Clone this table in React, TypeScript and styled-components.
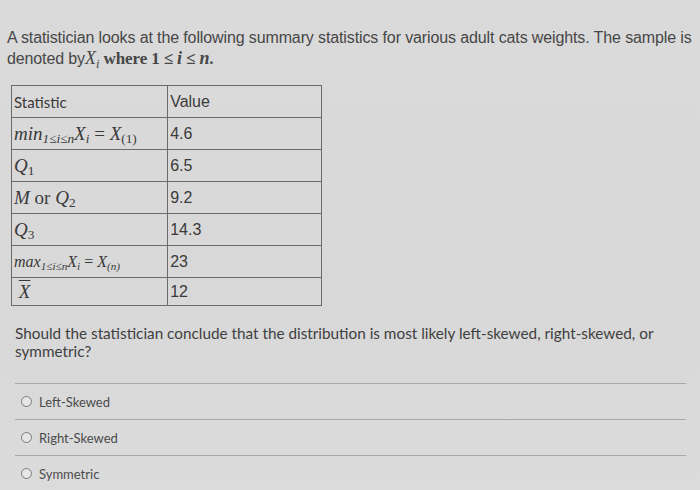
import React from 'react';
import styled, { createGlobalStyle } from 'styled-components';

const GlobalStyle = createGlobalStyle`
  html, body {
    margin: 0;
    padding: 0;
    background: #d9d9d9;
  }
  body {
    width: 700px;
    height: 490px;
    overflow: hidden;
  }
`;

const Page = styled.div`
  width: 700px;
  height: 490px;
  box-sizing: border-box;
  background: linear-gradient(180deg, #dadada 0%, #d8d8d8 60%, #dcdbdc 100%);
  padding: 27px 0 0 0;
`;

const Prompt = styled.p`
  margin: 0 0 0 7px;
  font-family: 'Liberation Sans', Arial, sans-serif;
  font-size: 16px;
  line-height: 21px;
  color: #474747;
  letter-spacing: -0.12px;
  white-space: nowrap;
`;

const M = styled.span<{ bold?: boolean }>`
  font-family: 'Liberation Serif', 'Times New Roman', serif;
  font-style: italic;
  font-weight: ${p => (p.bold ? 'bold' : 'normal')};
  font-size: 18px;
`;

const Upright = styled.span`
  font-family: 'Liberation Serif', 'Times New Roman', serif;
  font-style: normal;
  font-weight: bold;
  font-size: 17px;
`;

const Sub = styled.span<{ upright?: boolean }>`
  font-size: 0.7em;
  font-style: ${p => (p.upright ? 'normal' : 'italic')};
  position: relative;
  top: 0.3em;
`;

const StatsTable = styled.table`
  margin: 14px 0 0 11px;
  border-collapse: collapse;
  width: 311px;
  color: #3a3a3a;
`;

const Cell = styled.td<{ value?: boolean }>`
  border: 1px solid #6b6b6b;
  height: 31px;
  padding: 0 1px 0 2px;
  vertical-align: middle;
  white-space: nowrap;
  width: 153px;
  font-family: ${p => (p.value ? "'Liberation Sans', Arial, sans-serif" : "Lato, 'Open Sans', sans-serif")};
  font-size: ${p => (p.value ? '16px' : '15px')};
`;

const LastCell = styled(Cell)`
  height: 27px;
`;

const MathCell = styled.span<{ small?: boolean }>`
  font-family: 'Liberation Serif', 'Times New Roman', serif;
  font-style: italic;
  font-size: ${p => (p.small ? '16px' : '19px')};
  color: #3a3a3a;
`;

const Roman = styled.span`
  font-style: normal;
`;

const Bar = styled.span`
  text-decoration: overline;
`;

const Question = styled.p`
  margin: 18px 0 0 15px;
  width: 670px;
  font-family: Lato, 'Open Sans', sans-serif;
  font-size: 15.3px;
  line-height: 18px;
  color: #3f3f3f;
`;

const Options = styled.div`
  margin: 23px 14px 0 15px;
`;

const Option = styled.label`
  display: flex;
  align-items: center;
  gap: 7px;
  height: 35px;
  padding-left: 6px;
  border-top: 1px solid #a9a9a9;
  font-family: Lato, 'Open Sans', sans-serif;
  font-size: 13px;
  color: #4a4a4a;
`;

const Radio = styled.span`
  display: inline-block;
  width: 9px;
  height: 9px;
  border-radius: 50%;
  border: 1.3px solid #7a7a7a;
  background: #e6e6e6;
`;

export default function App() {
  const rows: { stat: React.ReactNode; value: string }[] = [
    {
      stat: (
        <MathCell>
          min<Sub>1≤i≤n</Sub>X<Sub>i</Sub> <Roman>=</Roman> X<Sub upright>(1)</Sub>
        </MathCell>
      ),
      value: '4.6',
    },
    { stat: <MathCell>Q<Sub upright>1</Sub></MathCell>, value: '6.5' },
    {
      stat: (
        <MathCell>
          M <Roman>or</Roman> Q<Sub upright>2</Sub>
        </MathCell>
      ),
      value: '9.2',
    },
    { stat: <MathCell>Q<Sub upright>3</Sub></MathCell>, value: '14.3' },
    {
      stat: (
        <MathCell small>
          max<Sub>1≤i≤n</Sub>X<Sub>i</Sub> <Roman>=</Roman> X<Sub>(n)</Sub>
        </MathCell>
      ),
      value: '23',
    },
  ];

  return (
    <Page>
      <GlobalStyle />
      <Prompt>
        A statistician looks at the following summary statistics for various adult cats weights. The sample is
        <br />
        denoted by<M>X<Sub>i</Sub></M>{' '}
        <Upright>where 1 ≤ </Upright>
        <M bold>i</M>
        <Upright> ≤ </Upright>
        <M bold>n</M>
        <Upright>.</Upright>
      </Prompt>

      <StatsTable>
        <tbody>
          <tr>
            <Cell>Statistic</Cell>
            <Cell value>Value</Cell>
          </tr>
          {rows.map((r, i) => (
            <tr key={i}>
              <Cell>{r.stat}</Cell>
              <Cell value>{r.value}</Cell>
            </tr>
          ))}
          <tr>
            <LastCell>
              <MathCell>
                &nbsp;<Bar>X</Bar>
              </MathCell>
            </LastCell>
            <LastCell value>12</LastCell>
          </tr>
        </tbody>
      </StatsTable>

      <Question>
        Should the statistician conclude that the distribution is most likely left-skewed, right-skewed, or
        symmetric?
      </Question>

      <Options>
        {['Left-Skewed', 'Right-Skewed', 'Symmetric'].map(o => (
          <Option key={o}>
            <Radio />
            {o}
          </Option>
        ))}
      </Options>
    </Page>
  );
}
